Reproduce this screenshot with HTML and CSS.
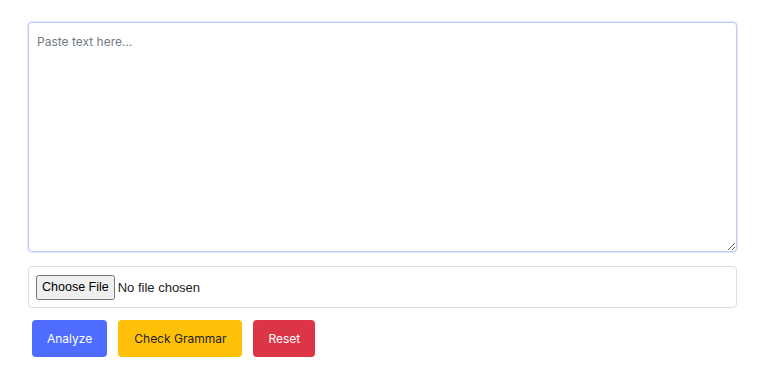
FILE: index.html
```html
<!DOCTYPE html>
<html lang="en">
<head>
  <meta charset="UTF-8">
  <meta name="viewport" content="width=device-width, initial-scale=1.0">
  <title>Text Analyzer</title>
  <link rel="stylesheet" href="styles.css">
</head>
<body>
  <div class="container">
    <textarea class="textBox" placeholder="Paste text here..."></textarea>
    <div class="fileBox">
      <input type="file" class="fileInput">
    </div>
    <div class="actions">
      <button class="btn btnBlue">Analyze</button>
      <button class="btn btnYellow">Check Grammar</button>
      <button class="btn btnRed">Reset</button>
    </div>
  </div>
</body>
</html>
```

FILE: styles.css
```css
* {
  margin: 0;
  padding: 0;
  box-sizing: border-box;
}
body {
  font-family: "Inter", "Liberation Sans", sans-serif;
  background: #fff;
}
.container {
  width: 709px;
  margin: 22px 0 0 28px;
}
.textBox {
  display: block;
  width: 100%;
  height: 230px;
  padding: 11px 8px;
  border: 1px solid #c3cbfb;
  box-shadow: 0 0 0 1px #e3e7fe;
  border-radius: 4px;
  font-family: inherit;
  font-size: 12px;
  color: #333;
  resize: both;
  outline: none;
}
.textBox::placeholder {
  color: #737a86;
}
.fileBox {
  margin-top: 14px;
  height: 42px;
  border: 1px solid #dedede;
  border-radius: 4px;
  padding: 0 7px;
  display: flex;
  align-items: center;
}
.fileInput {
  font-family: "Liberation Sans", Arial, sans-serif;
  font-size: 13px;
  color: #222;
}
.fileInput::file-selector-button {
  height: 25px;
  padding: 0 4px;
  margin-right: 3px;
  font-family: inherit;
  font-size: 12.5px;
}
.actions {
  display: flex;
  gap: 11px;
  margin: 12px 0 0 4px;
}
.btn {
  height: 37px;
  padding: 0 15px;
  border: none;
  border-radius: 4px;
  font-family: inherit;
  font-size: 12px;
  cursor: pointer;
}
.btnBlue {
  background: #4e6cff;
  color: #fff;
}
.btnYellow {
  background: #ffc107;
  color: #222;
  padding: 0 16px;
}
.btnRed {
  background: #dc3545;
  color: #fff;
}
```
